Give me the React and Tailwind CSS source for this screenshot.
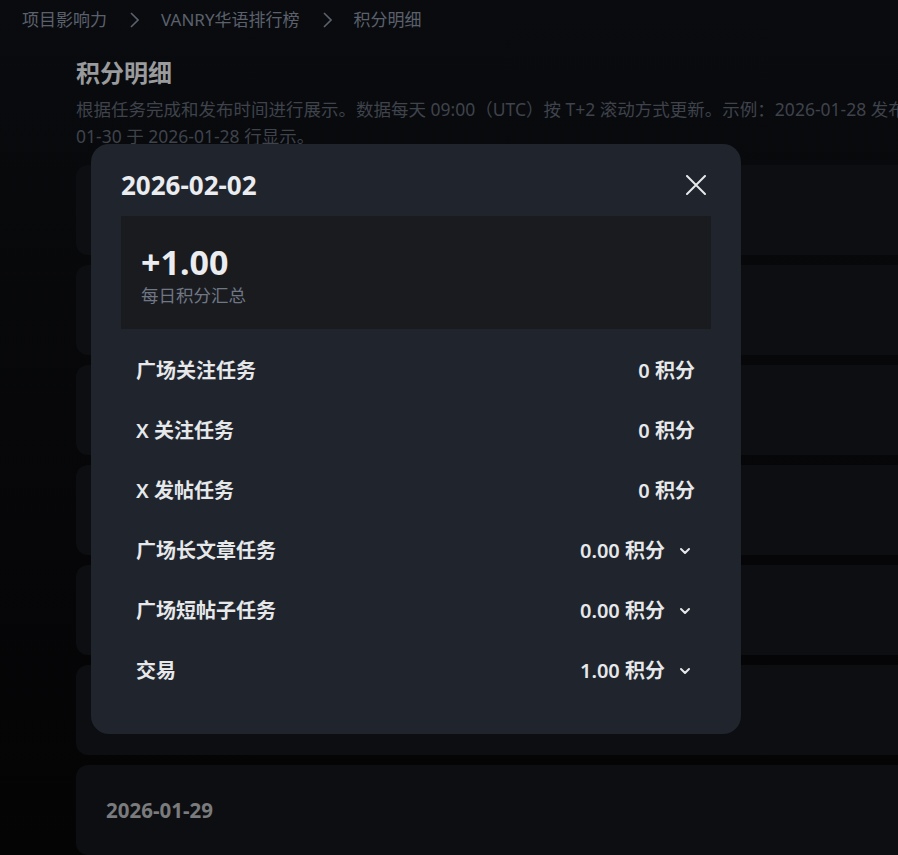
import React from 'react';

const rows = [
    { label: '广场关注任务', value: '0 积分', expand: false },
    { label: 'X 关注任务', value: '0 积分', expand: false },
    { label: 'X 发帖任务', value: '0 积分', expand: false },
    { label: '广场长文章任务', value: '0.00 积分', expand: true },
    { label: '广场短帖子任务', value: '0.00 积分', expand: true },
    { label: '交易', value: '1.00 积分', expand: true },
];

// cards behind the modal: only the last one's date is visible
const days = [null, null, null, null, null, null, '2026-01-29'];

const Crumb = () => (
    <svg width="10" height="16" viewBox="0 0 10 16" className="mx-[22px]">
        <polyline points="2,1 9,8 2,15" fill="none" stroke="#5a616d" strokeWidth="1.6" />
    </svg>
);

const App = () => {
    return (
        <div className="relative w-[898px] h-[855px] overflow-hidden bg-gradient-to-b from-[#0a0b0e] to-[#040405] font-['Noto_Sans','Noto_Sans_CJK_SC',sans-serif]">
            {/* breadcrumb */}
            <div className="flex items-center h-[40px] pl-[22px] text-[17px] leading-[24px] text-[#5a616d]">
                <span>项目影响力</span>
                <Crumb />
                <span>VANRY华语排行榜</span>
                <Crumb />
                <span>积分明细</span>
            </div>

            {/* page content behind overlay */}
            <div className="pl-[76px] w-[1200px]">
                <h1 className="mt-[17px] text-[24px] leading-[32px] font-bold text-[#9a9b9d]">积分明细</h1>
                <div className="mt-[7px] text-[17.5px] leading-[27px] text-[#3e434c] whitespace-nowrap">
                    <div>根据任务完成和发布时间进行展示。数据每天 09:00（UTC）按 T+2 滚动方式更新。示例：2026-01-28 发布的任务积分将于 2026-</div>
                    <div>01-30 于 2026-01-28 行显示。</div>
                </div>

                <div className="mt-[15px] flex flex-col gap-[10px]">
                    {days.map((d, i) => (
                        <div key={i} className="h-[90px] w-[1000px] rounded-[12px] bg-[#0d0e11] flex items-center pl-[30px]">
                            {d && <span className="text-[20.5px] leading-[28px] font-bold text-[#7a7b7d]">{d}</span>}
                        </div>
                    ))}
                </div>
            </div>

            {/* modal */}
            <div className="absolute left-[91px] top-[144px] w-[650px] h-[590px] rounded-[18px] bg-[#1f242d] px-[30px] pt-[29px]">
                <div className="flex items-center justify-between h-[24px]">
                    <span className="text-[26px] leading-[30px] font-bold text-[#eaecef]">2026-02-02</span>
                    <svg width="20" height="20" viewBox="0 0 20 20" className="mr-[5px]">
                        <path d="M1 1 L19 19 M19 1 L1 19" stroke="#e6e8ea" strokeWidth="2" strokeLinecap="round" />
                    </svg>
                </div>

                <div className="mt-[19px] h-[113px] bg-[#1a1b1f] px-[20px] pt-[29px]">
                    <div className="text-[34px] leading-[34px] font-bold text-[#eaecef]">+1.00</div>
                    <div className="mt-[4px] text-[17.5px] leading-[24px] text-[#6f7785]">每日积分汇总</div>
                </div>

                <div className="mt-[12px] flex flex-col">
                    {rows.map((r) => (
                        <div key={r.label} className="h-[60px] flex items-center justify-between pl-[15px] pr-[16px]">
                            <span className="text-[20px] leading-[28px] font-semibold text-[#e6e8ea]">{r.label}</span>
                            <div className="flex items-center">
                                <span className="text-[20px] leading-[28px] font-semibold text-[#e6e8ea]">{r.value}</span>
                                {r.expand && (
                                    <svg width="12" height="8" viewBox="0 0 12 8" className="ml-[14px] mr-[4px]">
                                        <polyline points="2,2 6,6 10,2" fill="none" stroke="#e6e8ea" strokeWidth="2" strokeLinecap="round" strokeLinejoin="round" />
                                    </svg>
                                )}
                            </div>
                        </div>
                    ))}
                </div>
            </div>
        </div>
    );
};

export default App;
